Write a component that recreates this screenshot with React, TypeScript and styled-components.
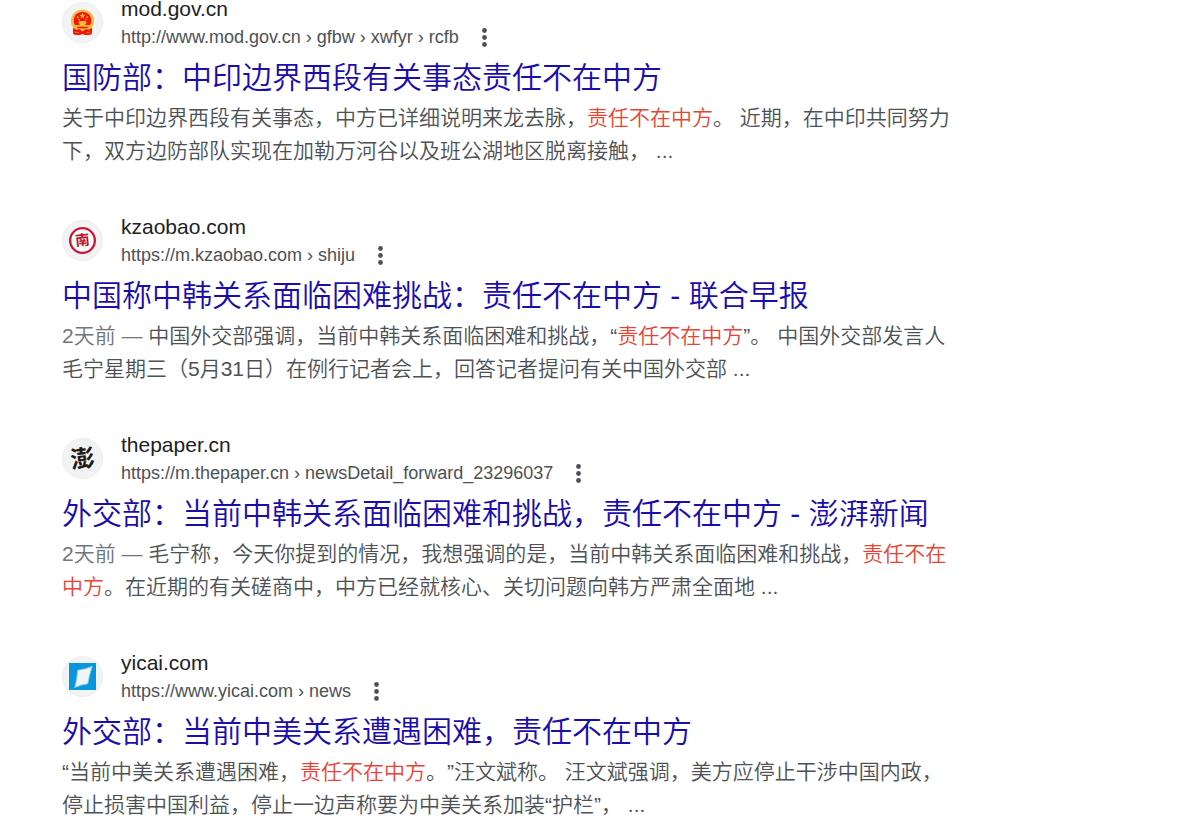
import React from "react";
import styled, { createGlobalStyle } from "styled-components";

const GlobalStyle = createGlobalStyle`
  body {
    margin: 0;
    background: #fff;
    font-family: "Liberation Sans", "Noto Sans CJK SC", sans-serif;
    text-spacing-trim: space-all;
  }
`;

const Results = styled.main`
  display: flex;
  flex-direction: column;
  gap: 51px;
  max-width: 893px;
  padding: 0 24px 20px 62px;
`;

const Result = styled.article`
  display: flex;
  flex-direction: column;
`;

const Source = styled.header`
  display: flex;
  align-items: flex-start;
  gap: 18px;
  height: 48px;
`;

const Badge = styled.span`
  display: flex;
  align-items: center;
  justify-content: center;
  box-sizing: border-box;
  width: 41px;
  height: 41px;
  margin-top: 2px;
  border: 1px solid #ecedef;
  border-radius: 50%;
  background: #f1f3f4;
`;

const SourceText = styled.div`
  display: flex;
  flex-direction: column;
  gap: 8px;
`;

const SiteName = styled.span`
  color: #202124;
  font-size: 21px;
  line-height: 18px;
`;

const Address = styled.div`
  display: flex;
  align-items: center;
  gap: 15px;
  height: 22px;
`;

const Cite = styled.cite`
  color: #4d5156;
  font-size: 18px;
  font-style: normal;
  line-height: 22px;
  white-space: nowrap;
`;

const MenuButton = styled.button`
  display: flex;
  align-items: center;
  justify-content: center;
  width: 20px;
  height: 22px;
  padding: 0;
  border: 0;
  background: none;
  cursor: pointer;
`;

const Title = styled.h3`
  margin: 10px 0 3px;
  font-size: 30px;
  font-weight: 350;
  line-height: 40px;
`;

const TitleLink = styled.a`
  color: #1a0dab;
  text-decoration: none;
  &:hover {
    text-decoration: underline;
  }
`;

const Snippet = styled.p`
  margin: 0;
  color: #4d5156;
  font-size: 21px;
  font-weight: 350;
  line-height: 33px;
`;

const Age = styled.span`
  color: #70757a;
`;

const Match = styled.em`
  color: #ea4335;
  font-style: normal;
`;

const LogoSvg = styled.svg`
  display: block;
  width: 27px;
  height: 27px;
  overflow: visible;
`;

const LogoChar = styled.text`
  font-family: "Noto Sans CJK SC", sans-serif;
  font-weight: 700;
  text-anchor: middle;
`;

const EmblemLogo = () => (
  <LogoSvg viewBox="0 0 28 28" aria-hidden="true">
    <path d="M5 19h18l.8 3-.8 4.500-5 .5-4-1-4 1-5-.5-.8-4.500z" fill="#ee1608" />
    <circle cx="14" cy="12.500" r="12" fill="#ecc04a" />
    <circle cx="14" cy="12" r="9.200" fill="#f51505" />
    <path d="M14 4l.9 1.900 2.100.2-1.600 1.400.5 2-1.900-1-1.900 1 .5-2-1.600-1.400 2.100-.2z" fill="#f3bd35" />
    <g fill="#f3bd35">
      <circle cx="9" cy="8.500" r="1" />
      <circle cx="10.500" cy="11" r=".9" />
      <circle cx="17.500" cy="11" r=".9" />
      <circle cx="19" cy="8.500" r="1" />
      <path d="M9.500 14.500l1.500-2h6l1.500 2-1.500.5v1.500h4.500v2h-15v-2H11V15z" />
    </g>
    <path d="M4 20l4 1 6-1 6 1 4-1-.5 6-5 1-4.500-1-4.500 1-5-1z" fill="#ee1608" />
    <path d="M5 19c3 2 5 .5 7 1s3 1 4 0 4 1 7-1l-2 2.500-3.500-.5-3.500 1.500-3.500-1.500-3.500.5z" fill="#e9a928" />
    <circle cx="14" cy="21.500" r="1.600" fill="#f3bd35" />
    <path d="M6 24l4 .5M22 24l-4 .5" stroke="#f0a01c" strokeWidth=".8" />
  </LogoSvg>
);

const SouthLogo = () => (
  <LogoSvg viewBox="0 0 28 28" aria-hidden="true">
    <circle cx="14" cy="14" r="12.800" fill="#fff" stroke="#cb1735" strokeWidth="2.400" />
    <LogoChar x="14" y="19" fontSize="15" fill="#b8152f" transform="rotate(-6 14 14)">南</LogoChar>
  </LogoSvg>
);

const PengLogo = () => (
  <LogoSvg viewBox="0 0 28 28" aria-hidden="true">
    <LogoChar x="14" y="23" fontSize="25" fill="#231815" transform="rotate(-6 14 14)">澎</LogoChar>
  </LogoSvg>
);

const YicaiLogo = () => (
  <LogoSvg viewBox="0 0 28 28" aria-hidden="true">
    <path d="M0 0h28v28H0z" fill="#0796dc" />
    <path d="M9 7.500Q17 6.500 24 3.500Q21 12 19.500 21.500Q12 22.500 6 25.500Q8.500 17 9 7.500z" fill="#f1f3f4" stroke="#8accec" strokeWidth="1" />
  </LogoSvg>
);

const DotsIcon = () => (
  <svg width="6" height="20" viewBox="0 0 6 20" fill="#4d5156" aria-hidden="true">
    <circle cx="3.500" cy="3.500" r="2.400" />
    <circle cx="3.500" cy="10.500" r="2.400" />
    <circle cx="3.500" cy="17.500" r="2.400" />
  </svg>
);

interface Entry {
  site: string;
  url: string;
  path: string;
  title: string;
  logo: React.ReactNode;
  snippet: React.ReactNode;
}

const entries: Entry[] = [
  {
    site: "mod.gov.cn",
    url: "http://www.mod.gov.cn",
    path: " › gfbw › xwfyr › rcfb",
    title: "国防部：中印边界西段有关事态责任不在中方",
    logo: <EmblemLogo />,
    snippet: (
      <>
        关于中印边界西段有关事态，中方已详细说明来龙去脉，<Match>责任不在中方</Match>。 近期，在中印共同努力下，双方边防部队实现在加勒万河谷以及班公湖地区脱离接触， ...
      </>
    ),
  },
  {
    site: "kzaobao.com",
    url: "https://m.kzaobao.com",
    path: " › shiju",
    title: "中国称中韩关系面临困难挑战：责任不在中方 - 联合早报",
    logo: <SouthLogo />,
    snippet: (
      <>
        <Age>2天前 — </Age>中国外交部强调，当前中韩关系面临困难和挑战，“<Match>责任不在中方</Match>”。 中国外交部发言人毛宁星期三（5月31日）在例行记者会上，回答记者提问有关中国外交部 ...
      </>
    ),
  },
  {
    site: "thepaper.cn",
    url: "https://m.thepaper.cn",
    path: " › newsDetail_forward_23296037",
    title: "外交部：当前中韩关系面临困难和挑战，责任不在中方 - 澎湃新闻",
    logo: <PengLogo />,
    snippet: (
      <>
        <Age>2天前 — </Age>毛宁称，今天你提到的情况，我想强调的是，当前中韩关系面临困难和挑战，<Match>责任不在中方</Match>。在近期的有关磋商中，中方已经就核心、关切问题向韩方严肃全面地 ...
      </>
    ),
  },
  {
    site: "yicai.com",
    url: "https://www.yicai.com",
    path: " › news",
    title: "外交部：当前中美关系遭遇困难，责任不在中方",
    logo: <YicaiLogo />,
    snippet: (
      <>
        “当前中美关系遭遇困难，<Match>责任不在中方</Match>。”汪文斌称。 汪文斌强调，美方应停止干涉中国内政，停止损害中国利益，停止一边声称要为中美关系加装“护栏”， ...
      </>
    ),
  },
];

export default function App() {
  return (
    <>
      <GlobalStyle />
      <Results lang="zh-CN">
        {entries.map((entry) => (
          <Result key={entry.site}>
            <Source>
              <Badge>{entry.logo}</Badge>
              <SourceText>
                <SiteName>{entry.site}</SiteName>
                <Address>
                  <Cite>
                    {entry.url}
                    {entry.path}
                  </Cite>
                  <MenuButton type="button" aria-label="关于此结果">
                    <DotsIcon />
                  </MenuButton>
                </Address>
              </SourceText>
            </Source>
            <Title>
              <TitleLink href={entry.url}>{entry.title}</TitleLink>
            </Title>
            <Snippet>{entry.snippet}</Snippet>
          </Result>
        ))}
      </Results>
    </>
  );
}
